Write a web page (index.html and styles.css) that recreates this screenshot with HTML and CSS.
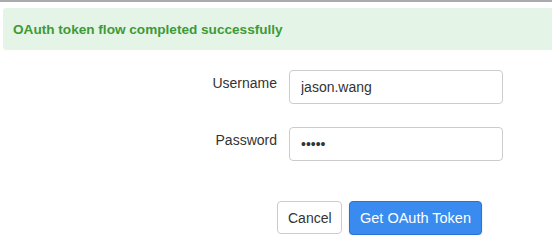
FILE: index.html
```html
<!DOCTYPE html>
<html lang="en">
<head>
    <meta charset="UTF-8">
    <title>OAuth Token</title>
    <link rel="stylesheet" href="styles.css">
</head>
<body>
    <div class="top-bar"></div>

    <!-- Status message -->
    <div class="alert-success">OAuth token flow completed successfully</div>

    <!-- Login form -->
    <form class="token-form" onsubmit="return false;">
        <div class="form-grid">
            <label class="form-label" for="username">Username</label>
            <input class="form-input" id="username" type="text" value="jason.wang">

            <label class="form-label" for="password">Password</label>
            <input class="form-input" id="password" type="password" value="12345">
        </div>
        <div class="form-actions">
            <button class="btn btn-default" type="button">Cancel</button>
            <button class="btn btn-primary" type="submit">Get OAuth Token</button>
        </div>
    </form>
</body>
</html>
```

FILE: styles.css
```css
body {
    margin: 0;
    padding: 0;
    background-color: #fff;
    font-family: "Liberation Sans", Arial, sans-serif;
    font-size: 14px;
    color: #333;
    overflow: hidden;
}
.top-bar {
    height: 2px;
    background-color: #a9abae;
    margin-bottom: 6px;
}
.alert-success {
    margin-left: 3px;
    height: 42px;
    line-height: 43px;
    padding-left: 10px;
    background-color: #e4f4e6;
    color: #3d9a37;
    font-weight: bold;
    font-size: 13.6px;
    border-radius: 3px 0 0 3px;
}
.token-form {
    margin-top: 20px;
}
.form-grid {
    display: grid;
    grid-template-columns: 277px 214px;
    column-gap: 12px;
    row-gap: 23px;
}
.form-label {
    text-align: right;
    padding-top: 5px;
    color: #333;
}
.form-input {
    box-sizing: border-box;
    height: 34px;
    padding: 0 11px;
    border: 1px solid #ccc;
    border-radius: 4px;
    font-family: inherit;
    font-size: 14px;
    color: #333;
    outline: none;
}
.form-actions {
    display: flex;
    gap: 7px;
    margin-top: 40px;
    padding-left: 277px;
}
.btn {
    height: 33px;
    padding: 0 10px;
    font-family: inherit;
    font-size: 14px;
    border-radius: 4px;
    cursor: pointer;
}
.btn-default {
    width: 65px;
    background-color: #fff;
    border: 1px solid #ccc;
    color: #333;
}
.btn-primary {
    width: 133px;
    height: 34px;
    background-color: #3a8bf0;
    border: 1px solid #2c72d4;
    color: #fff;
    font-size: 14.5px;
    box-shadow: 0 1px 2px rgba(0, 0, 0, 0.15);
}
```
